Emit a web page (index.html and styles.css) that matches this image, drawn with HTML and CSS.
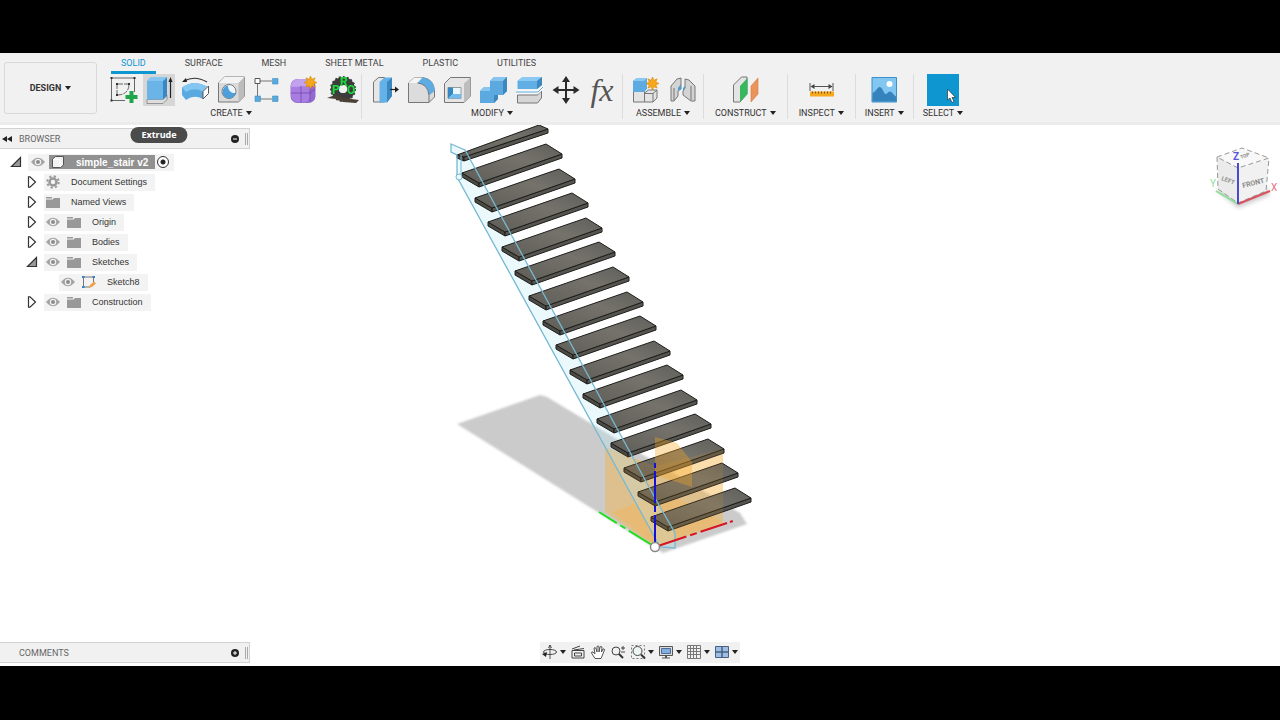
FILE: index.html
```html
<!DOCTYPE html>
<html lang="en">
<head>
	<meta charset="UTF-8" />
	<meta name="viewport" content="width=device-width, initial-scale=1.0" />
	<title>simple_stair v2</title>
	<link rel="stylesheet" href="styles.css">
</head>
<body>
	<!-- Shared shapes -->
	<svg class="defs" aria-hidden="true">
		<symbol id="eye" viewBox="0 0 14 10">
			<path d="M0 5Q7-3.500 14 5Q7 13.500 0 5Z" fill="#a3a3a3"/>
			<circle cx="7" cy="5" r="3.200" fill="#f1f1f1"/>
			<circle cx="7" cy="5" r="2" fill="#8c8c8c"/>
		</symbol>
		<symbol id="folder" viewBox="0 0 14 12">
			<path d="M0 1h6v1.500H0zM0 3.500h6.500L8 2h6v10H0z" fill="#999"/>
		</symbol>
		<symbol id="closed" viewBox="0 0 12 12">
			<path d="M2.500 .8H4L9.500 6 4 11.200H2.500z" fill="#fff" stroke="#333" stroke-width="1.200"/>
		</symbol>
		<symbol id="open" viewBox="0 0 12 12">
			<path d="M10.500 1.500v9H1.500z" fill="#999" stroke="#333" stroke-width="1.200"/>
		</symbol>
		<symbol id="star" viewBox="-7 -7 14 14">
			<path d="M0-7 1.500-3.500 5-5 3.500-1.500 7 0 3.500 1.500 5 5 1.500 3.500 0 7-1.500 3.500-5 5-3.500 1.500-7 0-3.500-1.500-5-5-1.500-3.500Z" fill="#f5a81c" stroke="#d98600" stroke-width=".6"/>
		</symbol>
	</svg>

	<div class="app">
		<header class="toolbar">
			<button class="workspace-btn">DESIGN<span class="caret"></span></button>
			<div class="ribbon">
				<nav class="tabs">
					<a href="#" class="tab active">SOLID</a>
					<a href="#" class="tab">SURFACE</a>
					<a href="#" class="tab">MESH</a>
					<a href="#" class="tab">SHEET METAL</a>
					<a href="#" class="tab">PLASTIC</a>
					<a href="#" class="tab">UTILITIES</a>
				</nav>
				<div class="groups">
					<section class="group">
						<div class="tools">
							<button class="tool" aria-label="Create sketch">
								<svg viewBox="0 0 32 32"><g fill="none" stroke="#666"><path d="M4.500 4v22.500H18M4.500 4h23v14"/><path d="M10 21V10h12C22 17 18 21 10 21" stroke-dasharray="5 1"/></g><path d="M3.500 3h2v2h-2zM26.500 3h2v2h-2zM3.500 25.500h2v2h-2zM9 9h2v2H9zM21 9h2v2h-2zM9 20h2v2H9z" fill="#333"/><path d="M22.500 17h4v4h4v4h-4v4h-4v-4h-4v-4h4z" fill="#1fa64a"/></svg>
							</button>
							<button class="tool hover" aria-label="Extrude">
								<svg viewBox="0 0 32 32"><path d="M4 25.500h16l4-4v4l-4 4H4z" fill="#ddd" stroke="#777" stroke-width=".7"/><path d="M4 7l4-4h16v18.500l-4 4H4z" fill="#6ab4e8"/><path d="M20 7l4-4v18.500l-4 4z" fill="#3988c4"/><path d="M4 7l4-4h16l-4 4z" fill="#85c5f0"/><path d="M27.500 24V5" stroke="#222" stroke-width="1.200"/><path d="M25.500 8l2-5 2 5z" fill="#222"/></svg>
								<span class="tooltip">Extrude</span>
							</button>
							<button class="tool" aria-label="Revolve">
								<svg viewBox="0 0 32 32"><path d="M3 13.500Q15 5 28 12.500l-4 4.500v8Q15 20 7 26l-4-5z" fill="#5aa9e0"/><path d="M3 13.500Q15 5 28 12.500l-4 5Q15 13 7 18z" fill="#83c6f2"/><path d="M24 17.500l5.500-5.500v7.500L24 25z" fill="#fff" stroke="#555"/><path d="M5 7Q16 1 28 8" fill="none" stroke="#333" stroke-width="1.200"/><path d="M3 8l4-4 1 4z" fill="#222"/></svg>
							</button>
							<button class="tool" aria-label="Hole">
								<svg viewBox="0 0 32 32"><path d="M3.500 9l6-6h20v19l-6 6h-20z" fill="#dadada" stroke="#777"/><path d="M3.500 9l6-6h20l-6 6z" fill="#f3f3f3"/><path d="M23.500 9l6-6v19l-6 6z" fill="#bcbcbc"/><circle cx="14" cy="17.500" r="7" fill="#eef7fd" stroke="#777"/><path d="M13 11.500c0 6 4 8 7.500 7.500A6.500 6.500 0 1 1 13 11.500Z" fill="#4c9fdb"/></svg>
							</button>
							<button class="tool" aria-label="Pattern">
								<svg viewBox="0 0 32 32"><path d="M9 7h12M6.500 10v12M9 25h12" stroke="#777"/><path d="M4 4.500h5v5H4z" fill="#fff" stroke="#555"/><path d="M21.500 4.500h5.500v5.500h-5.500zM4 22h5.500v5.500H4zM21.500 22h5.500v5.500h-5.500z" fill="#5aa9dd" stroke="#4190c4" stroke-width=".6"/></svg>
							</button>
							<button class="tool" aria-label="Create form">
								<svg viewBox="0 0 32 32"><rect x="3.500" y="5" width="25" height="24" rx="7" fill="#9368cf"/><path d="M4 13Q4 5 12 5h10l-2 7-2 2H5z" fill="#c1a2ee"/><path d="M4 13v8q0 7 8 7.500h6q5-.5 5-8V12Z" fill="#a77de0"/><path d="M4 19h19l5-4M14 12v17M23 12v15" stroke="#7446b4" fill="none" stroke-width=".8"/><use href="#star" x="17" y="2" width="13" height="13"/></svg>
							</button>
							<button class="tool" aria-label="Pro tools">
								<svg viewBox="0 0 32 32"><circle cx="20" cy="15" r="8" fill="none" stroke="#3c3c3c" stroke-width="8"/><circle cx="20" cy="15" r="12" fill="none" stroke="#3c3c3c" stroke-width="2" stroke-dasharray="2 2"/><path d="M4 24l8-3 9 3 15 2-3 3-13-1-7-3z" fill="#4b4036"/><circle cx="20" cy="15" r="4" fill="#f1f1f1"/><g class="gear-text"><text x="9" y="20">P</text><text x="17" y="12">R</text><text x="24" y="20">O</text></g></svg>
							</button>
						</div>
						<button class="group-label">CREATE<span class="caret"></span></button>
					</section>
					<section class="group">
						<div class="tools">
							<button class="tool" aria-label="Press pull">
								<svg viewBox="0 0 32 32"><path d="M5.500 8l5-4.500h6V28h-11z" fill="#e6e6e6" stroke="#777"/><path d="M11.500 8l5-4.500H24V22l-5 6.500h-7.500z" fill="#63b1e6"/><path d="M19 8l5-4.500V22l-5 6.500z" fill="#3b88c1"/><path d="M22 15.500h7" stroke="#222" stroke-width="1.200"/><path d="M27 12.500l4 3-4 3z" fill="#222"/></svg>
							</button>
							<button class="tool" aria-label="Fillet">
								<svg viewBox="0 0 32 32"><path d="M4.500 9l6-5.500h8Q30 5 30.500 17v6L25 28.500H4.500z" fill="#dcdcdc" stroke="#777"/><path d="M4.500 9l6-5.500h8l-5 5.500z" fill="#f5f5f5"/><path d="M18.500 3.500Q30 5 30.500 17L25 21.500Q24 10 13.500 9z" fill="#5dace3"/><path d="M13.500 9Q24 10 25 21.500v7" fill="none" stroke="#777"/></svg>
							</button>
							<button class="tool" aria-label="Shell">
								<svg viewBox="0 0 32 32"><path d="M4.500 9.500l6-6h20V22L24 28.500H4.500z" fill="#e5e5e5" stroke="#777"/><path d="M24 9.500l6.500-6V22L24 28.500z" fill="#bdbdbd"/><path d="M8 13.500h13v11H8z" fill="#eaf6fe" stroke="#777" stroke-width=".7"/><path d="M8 13.500h5V20l-5 4.500z" fill="#3687c2"/><path d="M8 24.500l5-4.500h8v4.500z" fill="#72bced"/></svg>
							</button>
							<button class="tool" aria-label="Combine">
								<svg viewBox="0 0 32 32"><path d="M4 17l4-4h6V7l4-4h13v14l-4 4h-5v4l-4 4H4z" fill="#5ba9df"/><path d="M14 7l4-4h13l-4 4zM4 17l4-4h6v4z" fill="#85c5ef"/><path d="M27 7l4-4v14l-4 4zM18 21h4v4l-4 4z" fill="#3c88bf"/></svg>
							</button>
							<button class="tool" aria-label="Split body">
								<svg viewBox="0 0 32 32"><path d="M5.500 21h20l4-4v7l-4 5h-20z" fill="#d6d6d6" stroke="#777"/><path d="M5.500 7l5-4H30v8l-5 4H5.500z" fill="#60aee3"/><path d="M5.500 7l5-4H30l-5 4z" fill="#8ac9f1"/><path d="M25 7l5-4v8l-5 4z" fill="#3c88bf"/><path d="M4 18h22l5-5" fill="none" stroke="#fff" stroke-width="3"/><path d="M4 18h22l5-5" fill="none" stroke="#58a6d8"/></svg>
							</button>
							<button class="tool" aria-label="Move">
								<svg viewBox="0 0 32 32"><path d="M18 6v20M8 16h20" stroke="#2b2b2b" stroke-width="2"/><path d="M18 2l4 6h-8zM18 30l4-6h-8zM4.500 16l6-4v8zM31.500 16l-6-4v8z" fill="#2b2b2b"/></svg>
							</button>
							<button class="tool fx" aria-label="Change parameters"><i>fx</i></button>
						</div>
						<button class="group-label">MODIFY<span class="caret"></span></button>
					</section>
					<section class="group">
						<div class="tools">
							<button class="tool" aria-label="New component">
								<svg viewBox="0 0 32 32"><path d="M4.500 17.500h11V28h-11zM15.500 19l4-3h8.500v8l-4 4h-8.500z" fill="#e4e4e4" stroke="#777"/><path d="M15.500 19.500H24L28 16M24 19.500V28" fill="none" stroke="#777"/><path d="M4 7l4-3h10v11l-3 3H4z" fill="#5dabe1"/><path d="M4 7l4-3h10l-3 3z" fill="#8ac9f1"/><use href="#star" x="17" y="3" width="13" height="13"/></svg>
							</button>
							<button class="tool" aria-label="Joint">
								<svg viewBox="0 0 32 32"><g stroke="#777" fill="#d4d4d4"><path d="M6 12l6-7 4-1v11l-3 2v5l-4 5H6z"/><path d="M30 12l-6-6-4-1v9l-2 3v4l8 6h4z"/><path d="M9 14v12M26 12v14" fill="none"/></g><path d="M16 10l-3 4v3l3-2zM18 17l2-3v-2l-2 2z" fill="#4a9bd2"/></svg>
							</button>
						</div>
						<button class="group-label">ASSEMBLE<span class="caret"></span></button>
					</section>
					<section class="group wide">
						<div class="tools">
							<button class="tool" aria-label="Offset plane">
								<svg viewBox="0 0 32 32"><path d="M4.500 11l8-8H18v17l-7 8H4.500z" fill="#e4e4e4" stroke="#777"/><path d="M11 12l7.500-8v16L11 28z" fill="#37b85d"/><path d="M22 12l7-8v16l-7 8z" fill="#ea935b" stroke="#d5793f" stroke-width=".6"/></svg>
							</button>
						</div>
						<button class="group-label">CONSTRUCT<span class="caret"></span></button>
					</section>
					<section class="group wide">
						<div class="tools">
							<button class="tool" aria-label="Measure">
								<svg viewBox="0 0 32 32"><path d="M5 9v8M28 9v8M6 12.500h21" stroke="#555"/><path d="M5.500 12.500l4-2.500v5zM27.500 12.500l-4-2.500v5z" fill="#444"/><path d="M5 17.500h24v5H5z" fill="#f6a91f"/><path d="M7 18.500h20" stroke="#7b5717" stroke-width="2" stroke-dasharray="1 2"/></svg>
							</button>
						</div>
						<button class="group-label">INSPECT<span class="caret"></span></button>
					</section>
					<section class="group narrow">
						<div class="tools">
							<button class="tool" aria-label="Insert image">
								<svg viewBox="0 0 32 32"><path d="M4 3.500h24.500V28H4z" fill="#82c6f2" stroke="#3f8fca"/><circle cx="21.500" cy="10" r="3" fill="#fff"/><path d="M4.500 19c4-2 5-6 7-6 3 0 4 6 6 7 2 0 3-3 4.500-2.500 2 0 3 3 6 5v5H4.500z" fill="#3583bd"/></svg>
							</button>
						</div>
						<button class="group-label">INSERT<span class="caret"></span></button>
					</section>
					<section class="group narrow">
						<div class="tools">
							<button class="tool selected" aria-label="Select">
								<svg viewBox="0 0 32 32"><path d="M20.500 15v11l2.500-2 2 4.500 2-1-2-4h3.500z" fill="#fff" stroke="#333" stroke-width=".7"/></svg>
							</button>
						</div>
						<button class="group-label">SELECT<span class="caret"></span></button>
					</section>
				</div>
			</div>
		</header>

		<main class="workspace">
			<svg class="model" viewBox="0 125 1280 541" role="img" aria-label="Stair model">
				<defs>
					<linearGradient id="tread" x1="0" x2="1" y1="1" y2="0">
						<stop offset="0" stop-color="#5f5d57"/>
						<stop offset=".6" stop-color="#74726b"/>
						<stop offset="1" stop-color="#605f5a"/>
					</linearGradient>
					<filter id="soft"><feGaussianBlur stdDeviation="1"/></filter>
					<g id="step" stroke="#1d1d1b" stroke-linejoin="round">
						<path d="M651 517L668 527V531L651 521Z" fill="#4b4a45"/>
						<path d="M668 527L751 498V502L668 531Z" fill="#55544f"/>
						<path d="M651 517L735 488L751 498L668 527Z" fill="url(#tread)"/>
					</g>
				</defs>
				<path d="M457 424L540 395L547 397L740 513L747 524L663 553Z" fill="#cbcbcb" filter="url(#soft)"/>
				<g fill="#f8b84a" fill-opacity=".35">
					<path d="M605 447L655 466V547L605 512Z"/>
					<path d="M655 466L723 449V524L655 547Z"/>
					<path d="M612 512L665 492L723 522L655 545Z"/>
				</g>
				<path d="M451 144L465 150L655 498L675 533V548L660 547L457 177V155L451 152Z" fill="#bdeaf8" fill-opacity=".3"/>
				<g stroke="#1d1d1b" stroke-linejoin="round">
					<path d="M457 155L464 157V161L457 158Z" fill="#4b4a45"/>
					<path d="M464 157L548 129V133L464 161Z" fill="#55544f"/>
					<path d="M457 155L539 125L548 129L464 157Z" fill="url(#tread)"/>
				</g>
				<use href="#step" x="-189" y="-344"/>
				<use href="#step" x="-176" y="-319"/>
				<use href="#step" x="-163" y="-295"/>
				<use href="#step" x="-149" y="-270"/>
				<use href="#step" x="-136" y="-246"/>
				<use href="#step" x="-122" y="-221"/>
				<use href="#step" x="-108" y="-196"/>
				<use href="#step" x="-95" y="-172"/>
				<use href="#step" x="-81" y="-147"/>
				<use href="#step" x="-68" y="-123"/>
				<use href="#step" x="-54" y="-98"/>
				<use href="#step" x="-40" y="-74"/>
				<use href="#step" x="-27" y="-49"/>
				<use href="#step" x="-13" y="-25"/>
				<use href="#step"/>
				<!-- Origin planes -->
				<g fill="#f5a623" fill-opacity=".12">
					<path d="M605 447L655 466V547L605 512Z"/>
					<path d="M655 466L723 449V524L655 547Z"/>
					<path d="M655 437L677 443L692 462V487L655 475Z" fill-opacity=".35"/>
				</g>
				<!-- Side profile sketch -->
				<path d="M451 144L465 150L655 498L675 533V548L660 547L457 177V155L451 152Z" fill="none" stroke="#76b9d2" stroke-width="1.300"/>
				<path d="M461 155V176" stroke="#76b9d2"/>
				<circle cx="459" cy="177" r="3" fill="#e8f8fd" stroke="#76b9d2"/>
				<!-- Axes -->
				<g fill="none" stroke-width="2">
					<path d="M655 547L599 512" stroke="#1fe01f" stroke-dasharray="31 4 6 4 30"/>
					<path d="M655 547L733 521" stroke="#d8141e" stroke-dasharray="33 4 7 4 28 3 3"/>
					<path d="M655 547V463" stroke="#1410d8" stroke-dasharray="32 3 6 3 32 3 5"/>
				</g>
				<circle cx="655" cy="547" r="4.500" fill="#fff" stroke="#888" stroke-width="1.500"/>
			</svg>

			<aside class="browser">
				<div class="panel-header">
					<button class="collapse" aria-label="Collapse browser"><svg width="10" height="6" viewBox="0 0 10 6"><path d="M5 0v6L0 3zM10 0v6L5 3z" fill="#222"/></svg></button>
					<h2>BROWSER</h2>
					<button class="round-btn" aria-label="Hide browser"><svg width="8" height="8" viewBox="0 0 8 8"><circle cx="4" cy="4" r="4" fill="#222"/><path d="M2 4h4" stroke="#fff"/></svg></button>
					<span class="grip"></span>
				</div>
				<ul class="tree">
					<li class="root">
						<button class="twist" aria-label="Collapse"><svg><use href="#open"/></svg></button>
						<div class="chip">
							<svg class="eye"><use href="#eye"/></svg>
							<label class="component" for="activeComponent">
								<svg viewBox="0 0 14 14"><path d="M1.500 4l3-2.500h8V10l-3 2.500h-8z" fill="#f1f1f1" stroke="#555"/><path d="M2 4.500h7V12" fill="none" stroke="#fff"/></svg>
								<span>simple_stair v2</span>
							</label>
							<input type="radio" id="activeComponent" checked>
						</div>
					</li>
					<li>
						<button class="twist" aria-label="Expand"><svg><use href="#closed"/></svg></button>
						<div class="chip">
							<svg class="eye gear" viewBox="0 0 14 14"><circle cx="7" cy="7" r="3.500" fill="none" stroke="#999" stroke-width="2.500"/><circle cx="7" cy="7" r="5.700" fill="none" stroke="#999" stroke-width="2" stroke-dasharray="2.200 2.280"/></svg>
							<span>Document Settings</span>
						</div>
					</li>
					<li>
						<button class="twist" aria-label="Expand"><svg><use href="#closed"/></svg></button>
						<div class="chip">
							<svg class="folder"><use href="#folder"/></svg>
							<span>Named Views</span>
						</div>
					</li>
					<li>
						<button class="twist" aria-label="Expand"><svg><use href="#closed"/></svg></button>
						<div class="chip">
							<svg class="eye"><use href="#eye"/></svg>
							<svg class="folder"><use href="#folder"/></svg>
							<span>Origin</span>
						</div>
					</li>
					<li>
						<button class="twist" aria-label="Expand"><svg><use href="#closed"/></svg></button>
						<div class="chip">
							<svg class="eye"><use href="#eye"/></svg>
							<svg class="folder"><use href="#folder"/></svg>
							<span>Bodies</span>
						</div>
					</li>
					<li>
						<button class="twist" aria-label="Collapse"><svg><use href="#open"/></svg></button>
						<div class="chip">
							<svg class="eye"><use href="#eye"/></svg>
							<svg class="folder"><use href="#folder"/></svg>
							<span>Sketches</span>
						</div>
					</li>
					<li class="leaf">
						<div class="chip">
							<svg class="eye"><use href="#eye"/></svg>
							<svg class="folder" viewBox="0 0 14 12"><path d="M1.500 1v10H8M1.500 1h10v6" fill="none" stroke="#555" stroke-width=".8"/><path d="M0 0h2.500v2H0zM10.500 0H13v2h-2.500zM0 10h2.500v2H0z" fill="#3b7fc4"/><path d="M7 12l1-3 4-3.500 2 2-4 3.500z" fill="#f0a04b"/></svg>
							<span>Sketch8</span>
						</div>
					</li>
					<li>
						<button class="twist" aria-label="Expand"><svg><use href="#closed"/></svg></button>
						<div class="chip">
							<svg class="eye"><use href="#eye"/></svg>
							<svg class="folder"><use href="#folder"/></svg>
							<span>Construction</span>
						</div>
					</li>
				</ul>
			</aside>

			<section class="comments panel-header">
				<h2>COMMENTS</h2>
				<button class="round-btn" aria-label="Show comments"><svg width="8" height="8" viewBox="0 0 8 8"><circle cx="4" cy="4" r="4" fill="#222"/><path d="M2 4h4M4 2v4" stroke="#fff"/></svg></button>
				<span class="grip"></span>
			</section>

			<svg class="viewcube" viewBox="1206 142 74 70" role="img" aria-label="View cube">
				<defs><filter id="haze"><feGaussianBlur stdDeviation="2"/></filter></defs>
				<path d="M1216 190L1238 208L1270 195L1262 180Z" fill="#ccc" filter="url(#haze)"/>
				<path d="M1217 157L1242 148L1269 158L1238 168Z" fill="#f8f8f8"/>
				<path d="M1217 157L1238 168V203L1218 189Z" fill="#ebebeb"/>
				<path d="M1238 168L1269 158L1266 191L1238 203Z" fill="#f1f1f1"/>
				<path d="M1217 157L1242 148L1269 158L1238 168ZM1217 157L1218 189L1238 203L1266 191L1269 158" fill="none" stroke="#999" stroke-dasharray="5 3"/>
				<path d="M1238 204L1216 191" stroke="#8fe09b" stroke-width="2"/>
				<path d="M1238 204L1270 191" stroke="#d9535f" stroke-width="2"/>
				<path d="M1238 204V163" stroke="#4a48cf" stroke-width="2"/>
				<text class="face front" transform="translate(1243 188) rotate(-14)">FRONT</text>
				<text class="face left" transform="translate(1221 180) rotate(20)">LEFT</text>
				<text class="face top" transform="translate(1241 159) rotate(-20)">TOP</text>
				<text class="axis-z" x="1233" y="160">Z</text>
				<text class="axis-y" x="1210" y="187">Y</text>
				<text class="axis-x" x="1271" y="191">X</text>
			</svg>

			<div class="navbar">
				<button aria-label="Orbit"><svg viewBox="0 0 16 16"><g fill="none" stroke="#444"><ellipse cx="8" cy="8" rx="6.500" ry="2.500"/><path d="M8 1v14M6.500 4l1.500-3 1.500 3" stroke-width=".9"/></g><path d="M0 10l5-2-1 5z" fill="#222"/></svg><span class="caret"></span></button>
				<button aria-label="Look at"><svg viewBox="0 0 16 16"><path d="M2 6.500h12V14H2zM4.500 9h7v3h-7zM2 5l8-3M4 6l10-1.500" fill="none" stroke="#444"/></svg></button>
				<button aria-label="Pan"><svg viewBox="0 0 16 16"><path d="M5 14.500L1.500 9Q1.500 7.500 3 8l2 2-1-6q1-1 2 .5L7 8V2.500q1-1 2 0V8l1-5q1-1 2 0L11.500 8 13 5q1.500-.5 1.500 1L12.500 11 11 14.500Z" fill="#fff" stroke="#444" stroke-width=".9"/></svg></button>
				<button aria-label="Zoom"><svg viewBox="0 0 16 16"><circle cx="6" cy="7" r="4" fill="none" stroke="#444"/><path d="M9 10l4 4" stroke="#333" stroke-width="2"/><path d="M11 4h4M13 2v4M11 8h4" stroke="#333" stroke-width=".9"/></svg></button>
				<button aria-label="Zoom window"><svg viewBox="0 0 16 16"><path d="M1.500 1.500h13v13h-13z" fill="none" stroke="#777" stroke-dasharray="2 2"/><circle cx="7.500" cy="7" r="4.500" fill="#eef6f6" stroke="#444"/><path d="M11 10.500l4 4" stroke="#333" stroke-width="2"/></svg><span class="caret"></span></button>
				<button aria-label="Display settings"><svg viewBox="0 0 16 16"><path d="M1.500 2.500h13v9h-13z" fill="#ddd" stroke="#555"/><path d="M3.500 4.500h9v5h-9z" fill="#83aede" stroke="#4b6e9b"/><path d="M7 12h2v1.500h3v1H4v-1h3z" fill="#555"/></svg><span class="caret"></span></button>
				<button aria-label="Grid and snaps"><svg viewBox="0 0 16 16"><path d="M1.500 1.500h13v13h-13zM4.500 1v13M7.500 1v13M10.500 1v13M1 4.500h13M1 7.500h13M1 10.500h13" fill="none" stroke="#777"/></svg><span class="caret"></span></button>
				<button aria-label="Viewports"><svg viewBox="0 0 16 16"><path d="M1.500 2.500h13v11h-13z" fill="#9dbfe7" stroke="#49617f"/><path d="M8 3v10M2 8h12" stroke="#49617f" stroke-width="1.500"/></svg><span class="caret"></span></button>
			</div>
		</main>
	</div>
</body>
</html>
```
FILE: styles.css
```css
:root {
	--panel-bg: #f1f1f1;
	--panel-border: #d2d2d2;
	--text-color: #333;
	--text-secondary: #666;
	--accent: #0d96d0;
}

* {
	box-sizing: border-box;
	margin: 0;
	padding: 0;
}

body {
	min-height: 100vh;
	padding: 53px 0 54px;
	display: flex;
	flex-direction: column;
	background: #000;
	color: var(--text-color);
	font-family: Roboto, "Liberation Sans", sans-serif;
	font-size: 9px;
}

button {
	border: none;
	background: none;
	color: inherit;
	font: inherit;
	cursor: pointer;
}

svg {
	display: block;
}

.defs {
	position: absolute;
	width: 0;
	height: 0;
}

.app {
	flex: 1;
	display: flex;
	flex-direction: column;
	background: #fff;
}

.caret {
	display: inline-block;
	border: 3px solid transparent;
	border-top: 4px solid #222;
	border-bottom: 0;
}

/* Toolbar */
.toolbar {
	display: flex;
	height: 72px;
	background: var(--panel-bg);
	border-bottom: 3px solid #ececec;
}

.workspace-btn {
	width: 93px;
	height: 52px;
	margin: 9px 4px 0;
	display: flex;
	align-items: center;
	justify-content: center;
	gap: 4px;
	border: 1px solid #d9d9d9;
	border-radius: 3px;
	font-weight: 700;
}

.ribbon {
	display: flex;
	flex-direction: column;
}

.tabs {
	display: flex;
	gap: 19px;
	padding-left: 10px;
}

.tab {
	height: 21px;
	padding: 0 10px;
	border-bottom: 3px solid transparent;
	color: #444;
	line-height: 20px;
	text-decoration: none;
}

.tab.active {
	color: var(--accent);
	border-color: var(--accent);
}

.groups {
	display: flex;
}

.group {
	display: flex;
	flex-direction: column;
	align-items: center;
	height: 45px;
	padding: 0 6px;
	border-right: 1px solid #dcdcdc;
}

.group.wide {
	padding: 0 11px;
}

.group.narrow {
	padding: 0 9px;
}

.group:last-child {
	border-right: none;
}

.tools {
	display: flex;
	gap: 4px;
}

.tool {
	position: relative;
	width: 32px;
	height: 32px;
}

.tool svg {
	width: 32px;
	height: 32px;
	overflow: visible;
}

.tool.hover {
	background: #d6d6d6;
}

.tool.selected {
	background: var(--accent);
}

.fx {
	padding-left: 4px;
	color: #555;
	font-family: "Liberation Serif", serif;
	font-size: 32px;
	line-height: 28px;
}

.gear-text {
	fill: #18d93c;
	font: 700 12px Roboto, sans-serif;
}

.group-label {
	display: flex;
	align-items: center;
	gap: 3px;
	height: 18px;
	white-space: nowrap;
}

.tooltip {
	position: absolute;
	z-index: 2;
	top: 53px;
	left: 50%;
	transform: translateX(-50%);
	padding: 0 11px;
	border-radius: 8px;
	background: #4b4b4b;
	color: #fff;
	font: 700 9px/16px "Open Sans", sans-serif;
}

/* Workspace */
.workspace {
	flex: 1;
	display: grid;
	grid-template-columns: 250px 1fr 250px;
	grid-template-rows: 1fr auto;
	padding: 3px 0;
}

.model {
	grid-area: 1 / 1 / -1 / -1;
	width: 100%;
	height: calc(100% + 6px);
	margin: -3px 0;
}

.browser {
	grid-area: 1 / 1;
}

.panel-header {
	display: flex;
	align-items: center;
	height: 21px;
	padding-right: 1px;
	background: var(--panel-bg);
	border: 1px solid var(--panel-border);
	border-left: none;
	color: var(--text-secondary);
}

.panel-header h2 {
	flex: 1;
	font-size: 9px;
	font-weight: 400;
}

.collapse {
	width: 19px;
	padding-left: 2px;
}

.grip {
	width: 3px;
	height: 12px;
	margin-left: 6px;
	border: 1px solid #aaa;
	border-width: 0 1px;
}

.comments {
	grid-area: 2 / 1;
	padding-left: 19px;
}

.tree {
	padding-top: 3px;
	list-style: none;
	font-family: "Liberation Sans", sans-serif;
}

.tree li {
	display: flex;
	align-items: center;
	gap: 6px;
	height: 20px;
	padding-left: 26px;
}

.tree .root {
	padding-left: 10px;
}

.tree .leaf {
	padding-left: 59px;
}

.twist,
.twist svg {
	width: 12px;
	height: 12px;
}

.chip {
	display: flex;
	align-items: center;
	height: 17px;
	padding: 0 8px 0 2px;
	background: #f3f3f3;
}

.chip > span {
	padding-left: 11px;
}

.root .chip {
	padding: 0 5px 0 3px;
}

.eye {
	width: 14px;
	height: 10px;
}

.gear {
	height: 14px;
}

.folder {
	width: 14px;
	height: 12px;
}

.eye + .folder {
	margin-left: 7px;
}

.component {
	display: flex;
	align-items: center;
	gap: 11px;
	height: 14px;
	margin: 0 2px 0 4px;
	padding: 0 7px 0 2px;
	background: #919191;
	color: #fff;
	font-size: 10px;
	font-weight: 700;
}

.component svg {
	width: 14px;
	height: 14px;
}

input[type="radio"] {
	appearance: none;
	width: 12px;
	height: 12px;
	border: 1px solid #333;
	border-radius: 50%;
	background: radial-gradient(circle, #222 2px, #fff 3px);
}

.viewcube {
	grid-area: 1 / 3;
	justify-self: end;
	width: 74px;
	height: 70px;
	margin-top: 14px;
}

.face {
	fill: #8b8b8b;
	font: 700 7px Roboto, sans-serif;
}

.face.left {
	font-size: 6px;
}

.face.top {
	font-size: 5px;
}

.axis-x,
.axis-y,
.axis-z {
	font: 10px Roboto, sans-serif;
}

.axis-x {
	fill: #e8727e;
}

.axis-y {
	fill: #8fe09b;
}

.axis-z {
	fill: #5a58d8;
	font-weight: 700;
}

.navbar {
	grid-area: 2 / 1 / 3 / -1;
	justify-self: center;
	display: flex;
	gap: 4px;
	padding: 0 2px;
	background: var(--panel-bg);
}

.navbar button {
	display: flex;
	align-items: center;
	gap: 2px;
	height: 20px;
}

.navbar svg {
	width: 16px;
	height: 16px;
}
```
